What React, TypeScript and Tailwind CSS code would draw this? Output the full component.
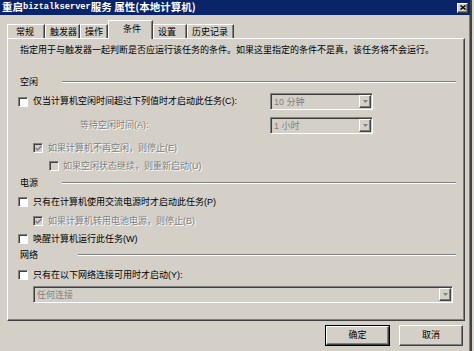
import React from "react";

const raised =
  "border border-t-white border-l-white border-r-[#404040] border-b-[#404040] shadow-[inset_-1px_-1px_0_#808080]";
const sunken =
  "border border-t-[#808080] border-l-[#808080] border-r-white border-b-white shadow-[inset_1px_1px_0_#404040]";
const dis = "text-[#808080] [text-shadow:1px_1px_0_#ffffff]";

function Check({ checked, disabled }: { checked?: boolean; disabled?: boolean }) {
  return (
    <span
      className={`relative block w-[10px] h-[10px] shrink-0 ${sunken} ${
        disabled ? "bg-[#d4d0c8]" : "bg-white"
      }`}
    >
      {checked && (
        <svg className="absolute left-[1px] top-[1px]" width="7" height="7" viewBox="0 0 7 7">
          <path
            d="M0.5 3 L2.5 5 L6.5 1"
            stroke={disabled ? "#808080" : "#000"}
            strokeWidth="1.5"
            fill="none"
          />
        </svg>
      )}
    </span>
  );
}

function Combo({ text, w }: { text: string; w: string }) {
  return (
    <div className={`flex items-center h-[17px] ${w} ${sunken} bg-[#d4d0c8]`}>
      <span className="flex-1 pl-[3px] pt-[1px] text-[#808080]">{text}</span>
      <span
        className={`w-[12px] h-[13px] mr-[1px] flex items-center justify-center bg-[#d4d0c8] ${raised}`}
      >
        <svg width="5" height="3" viewBox="0 0 5 3">
          <path d="M0 0H5L2.5 3Z" fill="#808080" />
        </svg>
      </span>
    </div>
  );
}

function Header({ label, lineMl, mt }: { label: string; lineMl: string; mt: string }) {
  return (
    <div className={`flex items-center h-[16px] ${mt} pl-[12px] pr-[8px]`}>
      <span>{label}</span>
      <div className={`flex-1 ${lineMl} border-t border-t-[#808080] border-b border-b-white`} />
    </div>
  );
}

function Tab({
  label,
  w,
  pl,
  selected,
}: {
  label: string;
  w: string;
  pl: string;
  selected?: boolean;
}) {
  return (
    <div
      className={`${w} ${pl} flex items-center bg-[#d4d0c8] border-t border-l border-t-white border-l-white border-r border-r-[#404040] shadow-[inset_-1px_0_0_#808080] ${
        selected ? "h-[19px] -mb-[1px] z-10 pb-[2px]" : "h-[14px] pt-[1px]"
      }`}
    >
      {label}
    </div>
  );
}

export default function App() {
  return (
    <div className="w-[474px] h-[351px] bg-[#dcd9d3] overflow-hidden font-['Liberation_Sans','Noto_Sans_CJK_SC',sans-serif] text-[9px] leading-none text-black">
      <div className="w-[472px] h-full bg-[#d4d0c8] flex flex-col border-r-2 border-r-[#404040] shadow-[inset_-1px_0_0_#808080]">
        {/* Title bar */}
        <div className="h-[15px] bg-[#0a246a] flex items-center pl-[2px] pr-[2px] text-white font-bold">
          <span className="text-[10.5px] font-['Noto_Sans_CJK_SC',sans-serif]">重启</span>
          <span className="text-[8.7px] font-['Liberation_Mono',monospace]">biztalkserver</span>
          <span className="text-[10.5px] font-['Noto_Sans_CJK_SC',sans-serif]">
            服务 属性(本地计算机)
          </span>
          <span
            className={`ml-auto w-[11px] h-[10px] flex items-center justify-center bg-[#d4d0c8] ${raised}`}
          >
            <svg width="6" height="5" viewBox="0 0 6 5">
              <path d="M0.5 0.5L5.5 4.5M5.5 0.5L0.5 4.5" stroke="#000" strokeWidth="1.5" />
            </svg>
          </span>
        </div>

        {/* Tabs */}
        <div className="h-[23px] flex items-end pl-[7px]">
          <Tab label="常规" w="w-[38px]" pl="pl-[8px]" />
          <Tab label="触发器" w="w-[35px]" pl="pl-[4px]" />
          <Tab label="操作" w="w-[28px]" pl="pl-[4px]" />
          <Tab label="条件" w="w-[45px]" pl="pl-[14px]" selected />
          <Tab label="设置" w="w-[34px]" pl="pl-[4px]" />
          <Tab label="历史记录" w="w-[47px]" pl="pl-[4px]" />
        </div>

        {/* Panel */}
        <div className={`ml-[7px] w-[458px] h-[283px] flex flex-col ${raised}`}>
          <div className="h-[16px] mt-[3px] pl-[12px] flex items-center">
            指定用于与触发器一起判断是否应运行该任务的条件。如果这里指定的条件不是真，该任务将不会运行。
          </div>

          <Header label="空闲" lineMl="ml-[24px]" mt="mt-[16px]" />

          <div className="h-[17px] mt-[3px] flex items-center pl-[10px]">
            <Check />
            <span className="ml-[5px] w-[237px]">仅当计算机空闲时间超过下列值时才启动此任务(C):</span>
            <Combo text="10 分钟" w="w-[103px]" />
          </div>

          <div className="h-[17px] mt-[7px] flex items-center pl-[72px]">
            <span className={`w-[190px] ${dis}`}>等待空闲时间(A):</span>
            <Combo text="1 小时" w="w-[103px]" />
          </div>

          <div className="h-[16px] mt-[6px] flex items-center pl-[25px]">
            <Check checked disabled />
            <span className={`ml-[5px] ${dis}`}>如果计算机不再空闲，则停止(E)</span>
          </div>

          <div className="h-[16px] mt-[2px] flex items-center pl-[41px]">
            <Check disabled />
            <span className={`ml-[4px] ${dis}`}>如果空闲状态继续，则重新启动(U)</span>
          </div>

          <Header label="电源" lineMl="ml-[24px]" mt="mt-[1px]" />

          <div className="h-[16px] mt-[3px] flex items-center pl-[10px]">
            <Check />
            <span className="ml-[5px]">只有在计算机使用交流电源时才启动此任务(P)</span>
          </div>

          <div className="h-[16px] mt-[3px] flex items-center pl-[25px]">
            <Check checked disabled />
            <span className={`ml-[5px] ${dis}`}>如果计算机转用电池电源，则停止(B)</span>
          </div>

          <div className="h-[16px] mt-[2px] flex items-center pl-[10px]">
            <Check />
            <span className="ml-[5px]">唤醒计算机运行此任务(W)</span>
          </div>

          <Header label="网络" lineMl="ml-[40px]" mt="mt-[0px]" />

          <div className="h-[16px] mt-[4px] flex items-center pl-[10px]">
            <Check />
            <span className="ml-[5px]">只有在以下网络连接可用时才启动(Y):</span>
          </div>

          <div className="mt-[3px] pl-[25px]">
            <Combo text="任何连接" w="w-[420px]" />
          </div>
        </div>

        {/* Buttons */}
        <div className="mt-[4px] flex justify-end pr-[7px] gap-[9px]">
          <div className="w-[65px] h-[21px] border border-black">
            <div className={`w-full h-full flex items-center justify-center ${raised}`}>确定</div>
          </div>
          <div className={`w-[64px] h-[21px] flex items-center justify-center ${raised}`}>
            取消
          </div>
        </div>
      </div>
    </div>
  );
}
